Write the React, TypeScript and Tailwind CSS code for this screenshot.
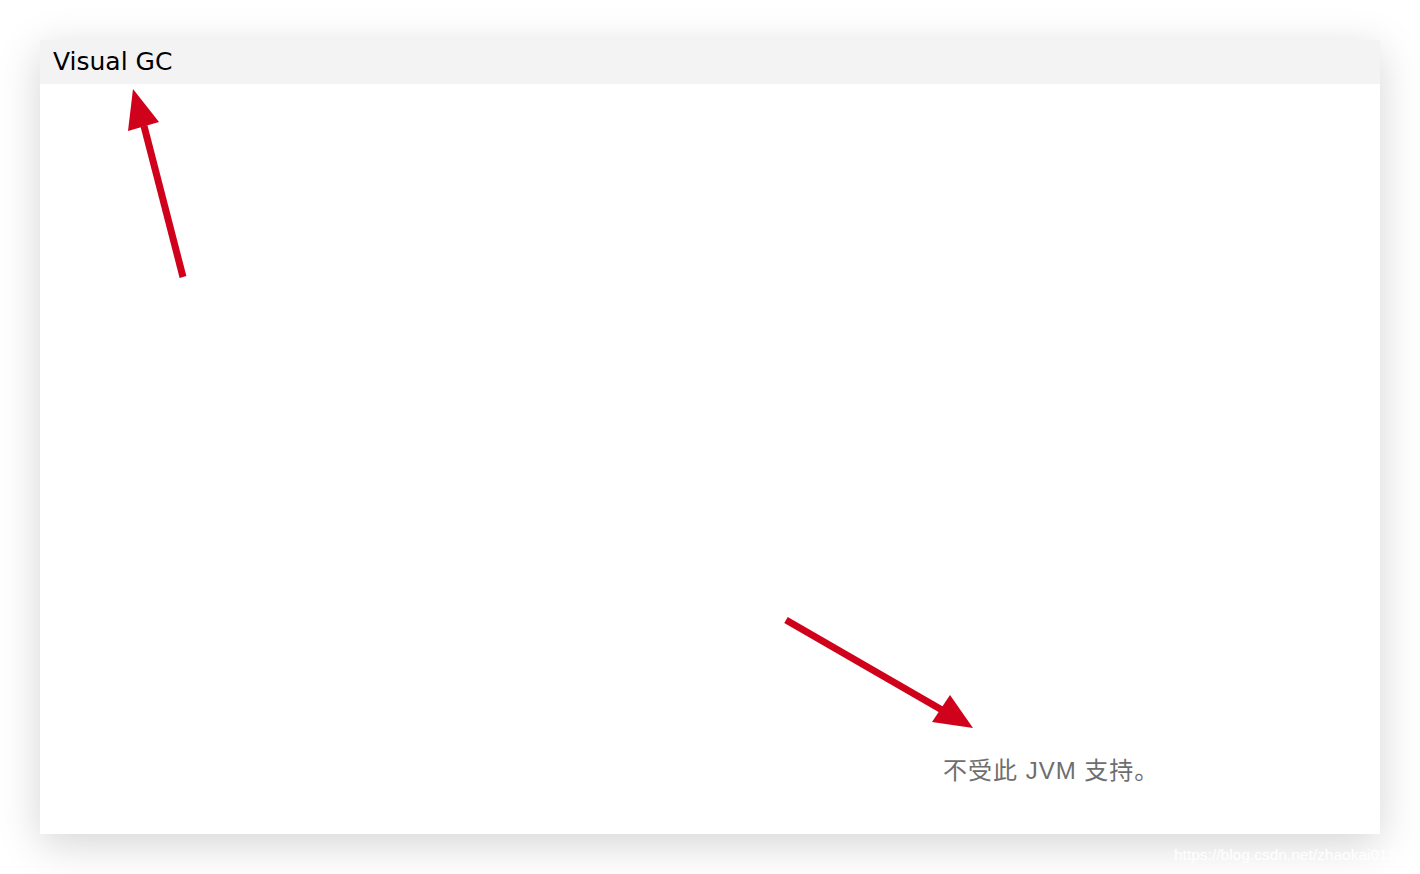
import React from "react";

export default function App() {
  return (
    <div className="relative w-[1420px] h-[874px] bg-white overflow-hidden">
      <div className="pt-[40px] pl-[40px]">
        <div className="w-[1340px] h-[794px] flex flex-col bg-white shadow-[0_10px_40px_rgba(0,0,0,0.17)]">
          <div className="h-[44px] bg-[#f3f3f3] flex items-center pl-[13px] pb-[2px]">
            <span
              className="text-[25px] leading-none text-black"
              style={{ fontFamily: '"DejaVu Sans", "Noto Sans", sans-serif' }}
            >
              Visual GC
            </span>
          </div>
          <div className="flex-1 flex items-end pl-[903px] pb-[48px]">
            <span
              className="text-[24px] leading-[30px] tracking-[1px] text-[#6e6e6e]"
              style={{ fontFamily: '"Liberation Sans", "Noto Sans CJK SC", sans-serif' }}
            >
              不受此 JVM 支持。
            </span>
          </div>
        </div>
      </div>

      <svg className="absolute inset-0 pointer-events-none" width="1420" height="874" viewBox="0 0 1420 874">
        <line x1="183" y1="277" x2="144" y2="126" stroke="#d0021b" strokeWidth="7" />
        <polygon points="133,89 128,131 159,122" fill="#d0021b" />
        <line x1="786" y1="620" x2="942" y2="710" stroke="#d0021b" strokeWidth="7" />
        <polygon points="973,728 932,722 950,695" fill="#d0021b" />
      </svg>

      <div
        className="absolute left-[1174px] top-[844px] text-[15.5px] leading-[22px] text-white"
        style={{ fontFamily: '"Liberation Sans", sans-serif' }}
      >
        https://blog.csdn.net/zhaokai0130
      </div>
    </div>
  );
}
